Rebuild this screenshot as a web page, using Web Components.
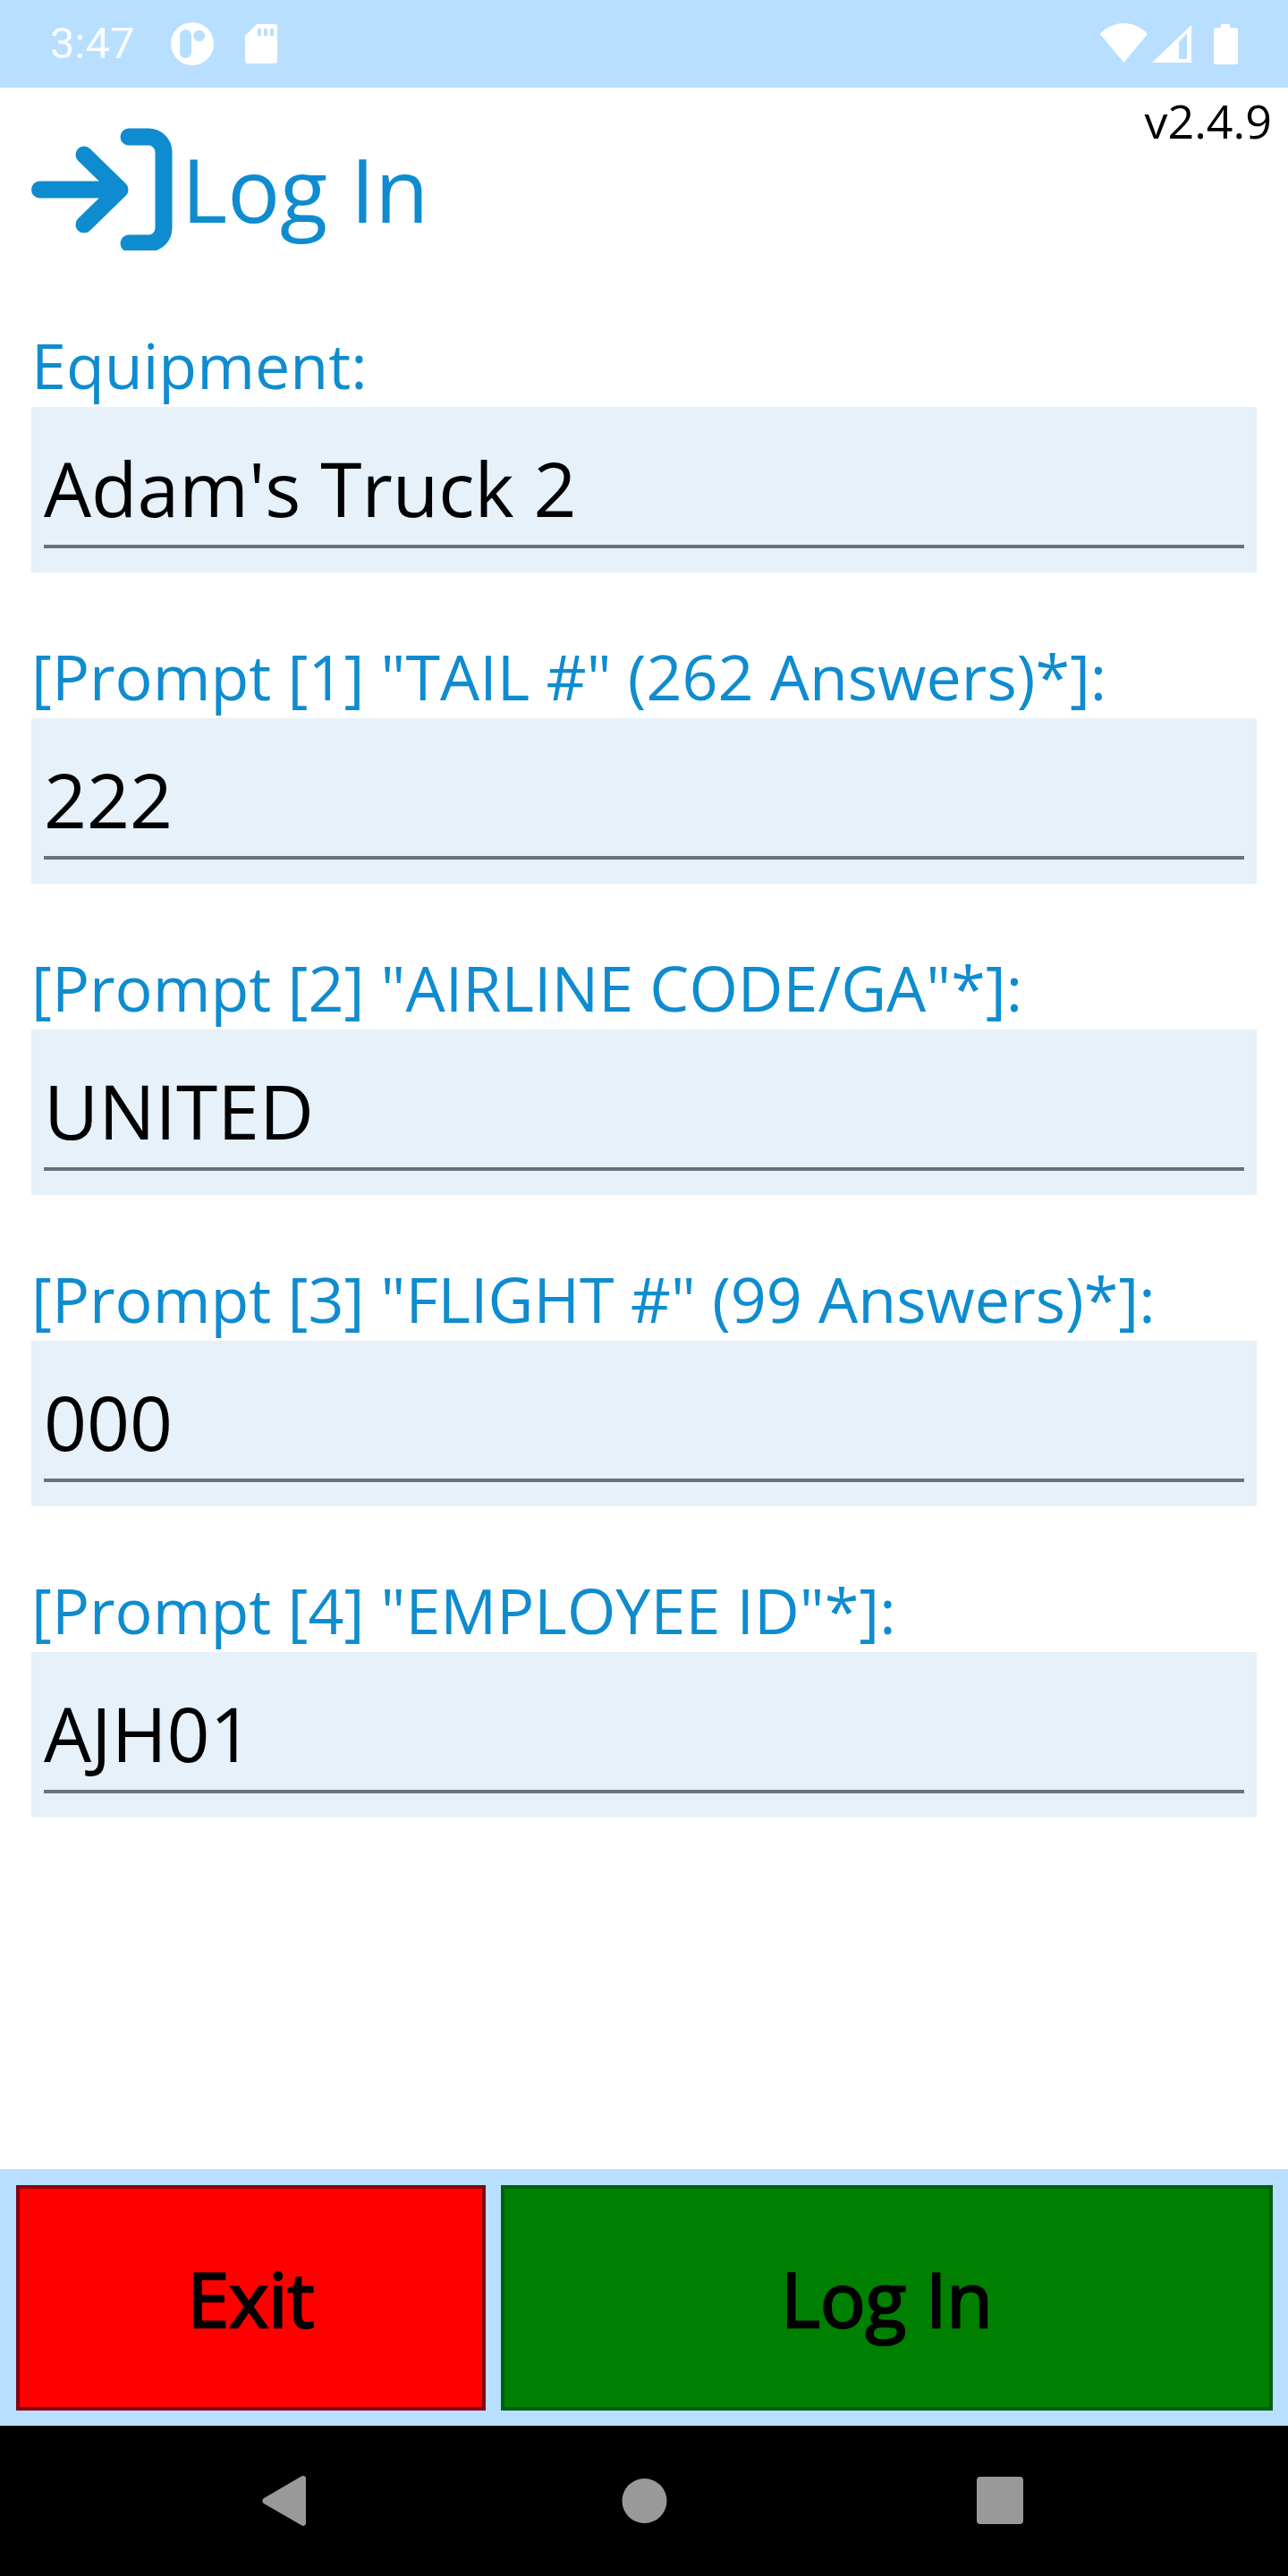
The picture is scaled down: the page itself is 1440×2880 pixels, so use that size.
<!DOCTYPE html>
<html><head><meta charset="utf-8">
<style>
html,body{margin:0;padding:0;background:#fff}
body{font-family:"Open Sans",sans-serif}
app-screen{height:2880px}
</style></head><body>
<app-screen>
  <status-bar slot="status"></status-bar>
  <app-header></app-header>
  <form-field label="Equipment:" value="Adam's Truck 2"></form-field>
  <form-field label='[Prompt [1] "TAIL #" (262 Answers)*]:' value="222"></form-field>
  <form-field label='[Prompt [2] "AIRLINE CODE/GA"*]:' value="UNITED"></form-field>
  <form-field label='[Prompt [3] "FLIGHT #" (99 Answers)*]:' value="000"></form-field>
  <form-field label='[Prompt [4] "EMPLOYEE ID"*]:' value="AJH01"></form-field>
  <action-bar slot="foot"></action-bar>
  <nav-bar slot="foot"></nav-bar>
</app-screen>
<script>
function def(name, html, init){
  customElements.define(name, class extends HTMLElement{
    connectedCallback(){
      if(this.shadowRoot) return;
      const r=this.attachShadow({mode:'open'});
      r.innerHTML=html;
      if(init) init(this,r);
    }
  });
}
def('app-screen',`<style>
:host{display:flex;flex-direction:column;width:1440px}
main{flex:1;display:flex;flex-direction:column}
</style><slot name="status"></slot><main><slot></slot></main><slot name="foot"></slot>`);

def('status-bar',`<style>
:host{display:flex;align-items:center;height:98px;background:#b8dfff;color:#fff;box-sizing:border-box;padding-left:56px;padding-right:56px}
.t{font:49px/98px Roboto,sans-serif;width:134px;opacity:.92}
svg{display:block;fill:#fff;flex:none}
.sp{flex:1}
</style>
<span class="t">3:47</span>
<svg width="50" height="50" viewBox="0 0 50 50"><path fill-rule="evenodd" d="M25 1a24 24 0 1 1 0 48a24 24 0 0 1 0-48ZM17.500 9a6.500 6.500 0 0 0-6.500 6.500V34.500a6.500 6.500 0 0 0 13 0V15.500a6.500 6.500 0 0 0-6.500-6.500ZM32.700 9.700a6.300 6.300 0 1 0 0 12.600a6.300 6.300 0 0 0 0-12.600Z"/></svg>
<svg width="38" height="46" viewBox="0 0 38 46" style="margin-left:33px"><path fill-rule="evenodd" d="M14 1H34a3 3 0 0 1 3 3V42a3 3 0 0 1-3 3H4a3 3 0 0 1-3-3V14ZM15 6V14H19V6ZM22 6V14H26V6ZM29 6V14H33V6Z"/></svg>
<span class="sp"></span>
<svg width="53" height="46" viewBox="0 0 53 46"><path d="M26.500 44L0 12C7 4 17 0 26.500 0C36 0 46 4 53 12Z"/></svg>
<svg width="44" height="46" viewBox="0 0 44 46" style="margin-left:5px"><path fill-rule="evenodd" d="M44 2V44H0ZM39 11L30 21V40H39Z"/></svg>
<svg width="27" height="46" viewBox="0 0 27 46" style="margin-left:25px"><path d="M8 1H18V5H25a2 2 0 0 1 2 2V44a2 2 0 0 1-2 2H2a2 2 0 0 1-2-2V7a2 2 0 0 1 2-2H8Z"/></svg>
`);

def('app-header',`<style>
:host{display:block;height:284px;box-sizing:border-box;color:#0f8ccf}
.v{text-align:right;color:#000;font-size:52px;line-height:74px;padding:0 18px 0 0;height:42px}
.row{display:flex;align-items:center;padding-left:35px}
h1{margin:0;font-weight:400;font-size:98px;line-height:132px;margin-left:8px;padding-top:2px}
svg{display:block;flex:none}
</style>
<div class="v">v2.4.9</div>
<div class="row"><svg width="160" height="140" viewBox="35 140 160 140" fill="none" stroke="#0f8ccf" stroke-width="19" stroke-linecap="round" stroke-linejoin="round"><path d="M44.500 212H128M94 173L134 212L94 251"/><path d="M144 153H166a17 17 0 0 1 17 17V255a17 17 0 0 1-17 17H144"/></svg><h1>Log In</h1></div>
`);

def('form-field',`<style>
:host{display:block;padding:0 35px;height:348px;box-sizing:border-box}
.l{color:#0f8ccf;font-size:70px;line-height:53px;padding-bottom:20px;white-space:nowrap}
.b{background:#e6f1fa;height:185px;box-sizing:border-box;padding:0 14px}
.v{font-size:84px;line-height:181px;height:158px;color:#000;border-bottom:4px solid #6c7178;white-space:nowrap;box-sizing:border-box}
</style><div class="l"></div><div class="b"><div class="v"></div></div>`,(h,r)=>{
  r.querySelector('.l').textContent=h.getAttribute('label');
  r.querySelector('.v').textContent=h.getAttribute('value');
});

def('action-btn',`<style>
:host{display:flex;align-items:center;justify-content:center;box-sizing:border-box;height:252px;border:4px solid;font-size:84px;color:#000;-webkit-text-stroke:2.5px #000}
</style><slot></slot>`);

def('action-bar',`<style>
:host{display:flex;gap:17px;background:#b8dfff;height:287px;box-sizing:border-box;padding:18px 18px 17px}
action-btn{flex:none}
.x{width:525px;background:#f00;border-color:#850010}
.g{width:863px;background:#008000;border-color:#006010}
</style><action-btn class="x">Exit</action-btn><action-btn class="g">Log In</action-btn>`);

def('nav-bar',`<style>
:host{display:block;height:168px;background:#000}
svg{display:block}
</style><svg width="1440" height="168" viewBox="0 2712 1440 168" fill="#999">
<path d="M339 2768a3 3 0 0 1 3 3V2821a3 3 0 0 1-4.500 2.500L295 2799a3.500 3.500 0 0 1 0-6L337 2768.500Z"/>
<circle cx="720.500" cy="2796" r="25"/>
<rect x="1092" y="2769" width="52" height="53" rx="4"/></svg>`);
</script>
</body></html>
